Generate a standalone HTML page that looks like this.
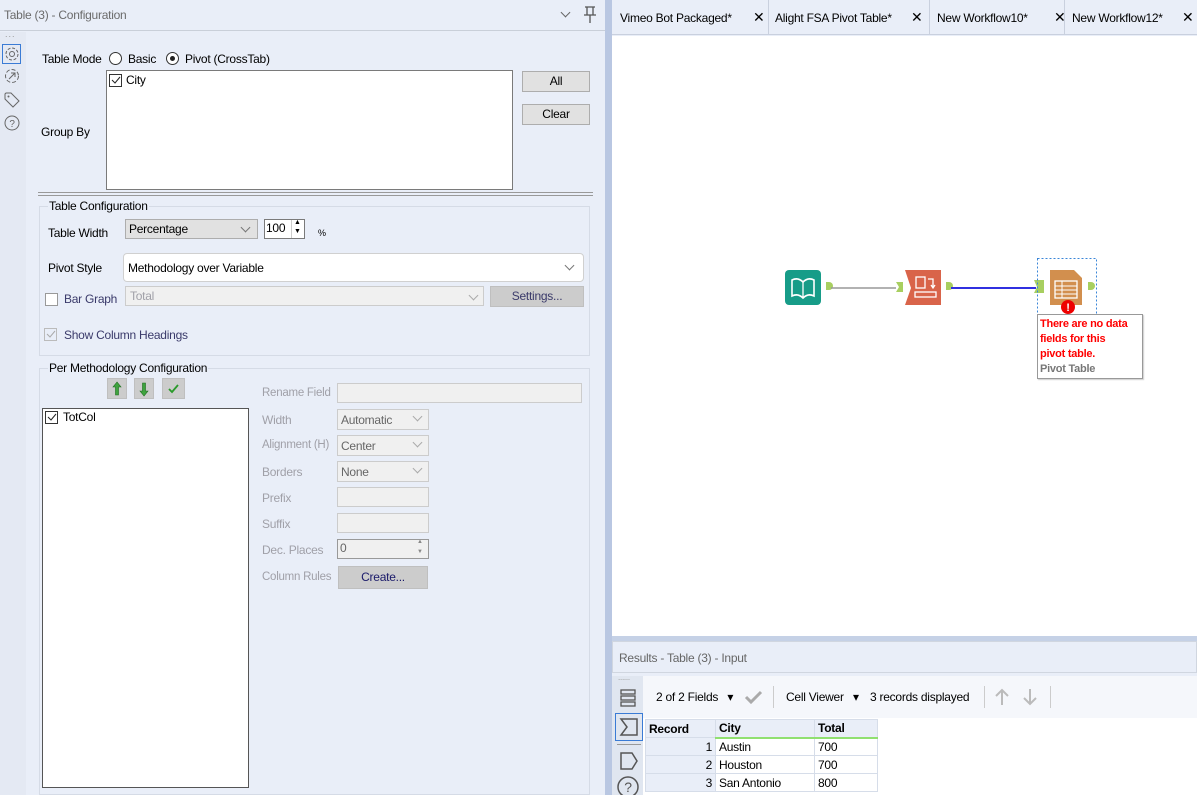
<!DOCTYPE html>
<html><head><meta charset="utf-8"><style>
*{box-sizing:border-box;margin:0;padding:0}
body{width:1197px;height:795px;overflow:hidden;background:#e9eef8;font-family:"Liberation Sans",sans-serif;font-size:12px;color:#000;position:relative;letter-spacing:-0.25px}
.a{position:absolute}
.lbl{position:absolute;font-size:12px;white-space:nowrap}
.gray{color:#a0a0a8}
.btn{position:absolute;background:#e1e1e1;border:1px solid #adadad;text-align:center;font-size:12px}
.dis{background:#cccccc;border:1px solid #bfbfbf}
.box{position:absolute;background:#f0f0f0;border:1px solid #ccc}
.cb{position:absolute;width:13px;height:13px;border:1px solid #333;background:#fff}
.grp{position:absolute;border:1px solid #d5dbe6}
.grp span{position:absolute;top:-8px;left:8px;background:#e9eef8;padding:0 1px}
.chev{position:absolute;width:7px;height:7px;border-right:1px solid #777;border-bottom:1px solid #777;transform:rotate(45deg)}
td{height:18px;border:1px solid #d6dde9;padding:0 3px;font-size:12px}
</style></head><body>
<div class="lbl" style="left:4px;top:8px;color:#6b6b6b">Table (3) - Configuration</div>
<div class="chev" style="left:562px;top:9px;border-color:#666"></div>
<svg class="a" style="left:582px;top:6px" width="16" height="18"><path d="M3 1h10M5 1v8M11 1v8M2 9h12M8 9v8" stroke="#555" stroke-width="1.3" fill="none"/></svg>
<div class="a" style="left:0;top:30px;width:605px;height:1px;background:#c9cfd9"></div>
<div class="a" style="left:0;top:32px;width:26px;height:763px;background:#e4e9f3"></div>
<div class="lbl" style="left:5px;top:29px;color:#999;font-size:9px;letter-spacing:1px">...</div>
<div class="a" style="left:2px;top:44px;width:19px;height:20px;border:1px solid #3a7bd5"></div>
<svg class="a" style="left:3px;top:45px" width="18" height="18"><circle cx="9" cy="9" r="2.5" fill="none" stroke="#666"/><circle cx="9" cy="9" r="6" fill="none" stroke="#666" stroke-dasharray="3 1.7"/></svg>
<svg class="a" style="left:3px;top:67px" width="18" height="18"><circle cx="9" cy="9" r="6.5" fill="none" stroke="#666" stroke-dasharray="4 2"/><path d="M6 12l6-6M8 6h4v4" stroke="#666" fill="none"/></svg>
<svg class="a" style="left:3px;top:91px" width="18" height="18"><path d="M2 3v5l8 8 6-6-8-8H3z" fill="none" stroke="#666"/><circle cx="5.5" cy="5.5" r="1" fill="#666"/></svg>
<svg class="a" style="left:3px;top:114px" width="18" height="18"><circle cx="9" cy="9" r="7" fill="none" stroke="#666"/><text x="9" y="13" font-size="10" text-anchor="middle" fill="#666" font-family="Liberation Sans">?</text></svg>

<div class="lbl" style="left:42px;top:52px">Table Mode</div>
<div class="a" style="left:109px;top:52px;width:13px;height:13px;border:1px solid #333;border-radius:50%;background:#fff"></div>
<div class="lbl" style="left:128px;top:52px">Basic</div>
<div class="a" style="left:166px;top:52px;width:13px;height:13px;border:1px solid #333;border-radius:50%;background:#fff"><div class="a" style="left:3px;top:3px;width:5px;height:5px;border-radius:50%;background:#222"></div></div>
<div class="lbl" style="left:185px;top:52px">Pivot (CrossTab)</div>
<div class="a" style="left:106px;top:70px;width:407px;height:120px;background:#fff;border:1px solid #7a7a7a"></div>
<div class="cb" style="left:109px;top:74px"><svg width="11" height="11" style="position:absolute;left:0;top:0"><path d="M2 5l3 3 5-6" stroke="#222" fill="none"/></svg></div>
<div class="lbl" style="left:126px;top:73px">City</div>
<div class="lbl" style="left:41px;top:125px">Group By</div>
<div class="btn" style="left:522px;top:71px;width:68px;height:21px;line-height:19px">All</div>
<div class="btn" style="left:522px;top:104px;width:68px;height:21px;line-height:19px">Clear</div>
<div class="a" style="left:38px;top:192px;width:555px;height:4px;border-top:1px solid #999;border-bottom:1px solid #999"></div>

<div class="grp" style="left:39px;top:206px;width:551px;height:150px"><span>Table Configuration</span></div>
<div class="lbl" style="left:48px;top:226px">Table Width</div>
<div class="a" style="left:125px;top:219px;width:133px;height:20px;background:#e1e1e1;border:1px solid #adadad"></div>
<div class="lbl" style="left:129px;top:222px">Percentage</div>
<div class="chev" style="left:242px;top:224px"></div>
<div class="a" style="left:264px;top:219px;width:41px;height:20px;background:#fff;border:1px solid #7a7a7a"></div>
<div class="lbl" style="left:266px;top:221px">100</div>
<div class="a" style="left:291px;top:220px;width:13px;height:18px;border-left:1px solid #ccc"></div>
<div class="lbl" style="left:294px;top:219px;font-size:7px">▲</div><div class="lbl" style="left:294px;top:228px;font-size:7px">▼</div>
<div class="lbl" style="left:318px;top:228px;font-size:9px">%</div>
<div class="lbl" style="left:48px;top:261px">Pivot Style</div>
<div class="a" style="left:123px;top:253px;width:461px;height:29px;background:#fff;border:1px solid #d0d0d0;border-radius:4px"></div>
<div class="lbl" style="left:128px;top:261px">Methodology over Variable</div>
<div class="chev" style="left:566px;top:262px"></div>
<div class="cb" style="left:45px;top:293px;border-color:#999"></div>
<div class="lbl" style="left:64px;top:292px;color:#3a3a6a">Bar Graph</div>
<div class="a" style="left:125px;top:286px;width:359px;height:20px;background:#f0f0f0;border:1px solid #ccc"></div>
<div class="lbl gray" style="left:130px;top:289px">Total</div>
<div class="chev" style="left:470px;top:292px;border-color:#aaa"></div>
<div class="btn dis" style="left:490px;top:286px;width:94px;height:21px;line-height:19px;color:#3a3a6a">Settings...</div>
<div class="cb" style="left:44px;top:328px;border-color:#bbb;background:#e9eef8"><svg width="11" height="11" style="position:absolute;left:0;top:0"><path d="M2 5l3 3 5-6" stroke="#aaa" fill="none"/></svg></div>
<div class="lbl" style="left:64px;top:328px;color:#3a3a6a">Show Column Headings</div>

<div class="grp" style="left:39px;top:368px;width:551px;height:427px"><span>Per Methodology Configuration</span></div>
<div class="btn dis" style="left:107px;top:378px;width:20px;height:21px"><svg width="18" height="19"><path d="M9 3l-4 5h2.5v8h3V8H13z" fill="#3fa33f" stroke="#1d6d1d" stroke-width=".6"/></svg></div>
<div class="btn dis" style="left:134px;top:378px;width:20px;height:21px"><svg width="18" height="19"><path d="M9 17l-4-5h2.5V4h3v8H13z" fill="#3fa33f" stroke="#1d6d1d" stroke-width=".6"/></svg></div>
<div class="btn dis" style="left:162px;top:378px;width:23px;height:21px"><svg width="21" height="19"><path d="M6 10l3 3 6-7" stroke="#2a9a2a" stroke-width="1.8" fill="none"/></svg></div>
<div class="a" style="left:42px;top:408px;width:207px;height:380px;background:#fff;border:1px solid #555"></div>
<div class="cb" style="left:45px;top:411px"><svg width="11" height="11" style="position:absolute;left:0;top:0"><path d="M2 5l3 3 5-6" stroke="#222" fill="none"/></svg></div>
<div class="lbl" style="left:63px;top:410px">TotCol</div>

<div class="lbl gray" style="left:262px;top:387px;font-size:11.5px">Rename Field</div>
<div class="box" style="left:337px;top:383px;width:245px;height:20px"></div>
<div class="lbl gray" style="left:262px;top:413px">Width</div>
<div class="box dis" style="left:337px;top:409px;width:92px;height:21px"></div><div class="lbl" style="left:341px;top:413px;color:#666">Automatic</div><div class="chev" style="left:414px;top:413px;border-color:#aaa"></div>
<div class="lbl gray" style="left:262px;top:439px;font-size:11.5px">Alignment (H)</div>
<div class="box dis" style="left:337px;top:435px;width:92px;height:21px"></div><div class="lbl" style="left:341px;top:439px;color:#666">Center</div><div class="chev" style="left:414px;top:439px;border-color:#aaa"></div>
<div class="lbl gray" style="left:262px;top:465px">Borders</div>
<div class="box dis" style="left:337px;top:461px;width:92px;height:21px"></div><div class="lbl" style="left:341px;top:465px;color:#666">None</div><div class="chev" style="left:414px;top:465px;border-color:#aaa"></div>
<div class="lbl gray" style="left:262px;top:491px">Prefix</div>
<div class="box" style="left:337px;top:487px;width:92px;height:20px"></div>
<div class="lbl gray" style="left:262px;top:517px">Suffix</div>
<div class="box" style="left:337px;top:513px;width:92px;height:20px"></div>
<div class="lbl gray" style="left:262px;top:543px">Dec. Places</div>
<div class="box" style="left:337px;top:539px;width:92px;height:20px;border-color:#999"></div><div class="lbl" style="left:340px;top:541px;color:#666">0</div>
<div class="lbl" style="left:417px;top:539px;font-size:6px;color:#888">▲</div><div class="lbl" style="left:417px;top:549px;font-size:6px;color:#888">▼</div>
<div class="lbl gray" style="left:262px;top:571px;font-size:11.5px">Column Rules</div>
<div class="btn dis" style="left:338px;top:566px;width:90px;height:23px;line-height:21px;color:#1a1a6a">Create...</div>

<div class="a" style="left:605px;top:0;width:7px;height:795px;background:#b9c7e2"></div>

<div class="a" style="left:612px;top:0;width:585px;height:35px;background:#e9eef8;border-bottom:1px solid #c9d0de"></div>
<div class="lbl" style="left:620px;top:11px">Vimeo Bot Packaged*</div><div class="lbl" style="left:753px;top:9px;font-size:14px">✕</div>
<div class="a" style="left:768px;top:0;width:1px;height:35px;background:#c9d0de"></div>
<div class="lbl" style="left:775px;top:11px">Alight FSA Pivot Table*</div><div class="lbl" style="left:911px;top:9px;font-size:14px">✕</div>
<div class="a" style="left:929px;top:0;width:1px;height:35px;background:#c9d0de"></div>
<div class="lbl" style="left:937px;top:11px">New Workflow10*</div><div class="lbl" style="left:1054px;top:9px;font-size:14px">✕</div>
<div class="a" style="left:1064px;top:0;width:1px;height:35px;background:#c9d0de"></div>
<div class="lbl" style="left:1072px;top:11px">New Workflow12*</div><div class="lbl" style="left:1182px;top:9px;font-size:14px">✕</div>
<div class="a" style="left:612px;top:36px;width:585px;height:600px;background:#fff"></div>

<svg class="a" style="left:770px;top:250px" width="400" height="140">
<rect x="15" y="20" width="36" height="35" rx="4" fill="#179c88"/>
<path d="M22 30c4-2 8-1 11 2 3-3 7-4 11-2v16c-4-2-8-1-11 2-3-3-7-4-11-2z" fill="none" stroke="#fff" stroke-width="1.6"/>
<path d="M33 32v16" stroke="#fff" stroke-width="1.3"/>
<path d="M56 32h3a4 4 0 010 8h-3z" fill="#a8cf60"/>
<line x1="61" y1="38" x2="126" y2="38" stroke="#999" stroke-width="1.5"/>
<path d="M126 32h7v10h-7l3-5z" fill="#a8cf60"/>
<path d="M135 20h36v35h-36l6-17z" fill="#d9644a"/>
<rect x="146" y="27" width="9" height="11" fill="none" stroke="#fff" stroke-width="1.3"/>
<path d="M158 29h5v8M161 35l2 3 2-3" stroke="#fff" fill="none" stroke-width="1.3"/>
<rect x="145" y="42" width="21" height="5" fill="none" stroke="#fff" stroke-width="1.3"/>
<path d="M176 32h3a4 4 0 010 8h-3z" fill="#a8cf60"/>
<line x1="181" y1="38" x2="266" y2="38" stroke="#3030e0" stroke-width="2"/>
<path d="M264 30h10v13h-10l3-6z" fill="#a8cf60"/>
<path d="M280 20h24l8 8v27h-32z" fill="#d28f4e"/>
<rect x="285" y="31" width="22" height="17" fill="none" stroke="#fff" stroke-width="1.3"/>
<path d="M285 36h22M285 40h22M285 44h22M292 31v17" stroke="#fff"/>
<path d="M318 32h3a4 4 0 010 8h-3z" fill="#a8cf60"/>
<rect x="267.5" y="8.5" width="59" height="60" fill="none" stroke="#3a86d8" stroke-dasharray="2 2"/>
<circle cx="298" cy="57" r="7" fill="#e00"/><text x="298" y="61" font-size="11" font-weight="bold" fill="#fff" text-anchor="middle" font-family="Liberation Sans">!</text>
</svg>
<div class="a" style="left:1037px;top:314px;width:106px;height:65px;background:#fff;border:1px solid #999;box-shadow:1px 1px 1px #ccc"></div>
<div class="lbl" style="left:1040px;top:317px;color:#f00;font-weight:bold;font-size:11px;line-height:15px">There are no data<br>fields for this<br>pivot table.</div>
<div class="lbl" style="left:1040px;top:363px;color:#777;font-weight:bold;font-size:11px">Pivot Table</div>

<div class="a" style="left:612px;top:636px;width:585px;height:5px;background:#c5d1e6"></div>
<div class="a" style="left:612px;top:641px;width:585px;height:32px;background:#e9eef8;border:1px solid #d0d6e0"></div>
<div class="lbl" style="left:619px;top:651px;color:#666">Results - Table (3) - Input</div>
<div class="a" style="left:612px;top:676px;width:585px;height:119px;background:#fff"></div>
<div class="a" style="left:612px;top:676px;width:31px;height:119px;background:#e0e6f0"></div>
<div class="lbl" style="left:618px;top:673px;color:#999;font-size:8px">......</div>
<svg class="a" style="left:619px;top:688px" width="20" height="20"><rect x="2" y="2" width="14" height="4" fill="none" stroke="#555" stroke-width="1.3"/><rect x="2" y="8" width="14" height="4" fill="none" stroke="#555" stroke-width="1.3"/><rect x="2" y="14" width="14" height="4" fill="none" stroke="#555" stroke-width="1.3"/></svg>
<div class="a" style="left:615px;top:713px;width:28px;height:28px;border:1px solid #3a7bd5"></div>
<svg class="a" style="left:618px;top:716px" width="22" height="22"><path d="M3 3h16v16H3l6-8z" fill="none" stroke="#555" stroke-width="1.5"/></svg>
<div class="a" style="left:617px;top:744px;width:24px;height:1px;background:#999"></div>
<svg class="a" style="left:618px;top:750px" width="22" height="22"><path d="M3 3h11l5 8-5 8H3z" fill="none" stroke="#555" stroke-width="1.5"/></svg>
<svg class="a" style="left:616px;top:775px" width="24" height="20"><circle cx="12" cy="12" r="10" fill="none" stroke="#555" stroke-width="1.5"/><text x="12" y="17" font-size="14" text-anchor="middle" fill="#555" font-family="Liberation Sans">?</text></svg>
<div class="a" style="left:643px;top:676px;width:554px;height:42px;background:#f5f7fb"></div>
<div class="lbl" style="left:656px;top:690px">2 of 2 Fields &nbsp;&nbsp;▾</div>
<svg class="a" style="left:744px;top:689px" width="20" height="16"><path d="M2 8l5 5 10-10" stroke="#aaa" stroke-width="3" fill="none"/></svg>
<div class="a" style="left:773px;top:686px;width:1px;height:22px;background:#ccc"></div>
<div class="lbl" style="left:786px;top:690px">Cell Viewer &nbsp;&nbsp;▾</div>
<div class="lbl" style="left:870px;top:690px">3 records displayed</div>
<div class="a" style="left:984px;top:686px;width:1px;height:22px;background:#ccc"></div>
<svg class="a" style="left:993px;top:688px" width="18" height="18"><path d="M9 2v15M3 8l6-6 6 6" stroke="#bbb" stroke-width="2" fill="none"/></svg>
<svg class="a" style="left:1021px;top:688px" width="18" height="18"><path d="M9 1v15M3 10l6 6 6-6" stroke="#bbb" stroke-width="2" fill="none"/></svg>
<div class="a" style="left:1050px;top:686px;width:1px;height:22px;background:#ccc"></div>
<table class="a" style="left:645px;top:719px;border-collapse:collapse;width:233px">
<tr style="background:#e9eef8"><td style="width:70px;font-weight:bold">Record</td><td style="width:99px;font-weight:bold;border-bottom:2px solid #90e070">City</td><td style="font-weight:bold;border-bottom:2px solid #90e070">Total</td></tr>
<tr><td style="background:#e9eef8;text-align:right">1</td><td>Austin</td><td>700</td></tr>
<tr><td style="background:#e9eef8;text-align:right">2</td><td>Houston</td><td>700</td></tr>
<tr><td style="background:#e9eef8;text-align:right">3</td><td>San Antonio</td><td>800</td></tr>
</table>
</body></html>
